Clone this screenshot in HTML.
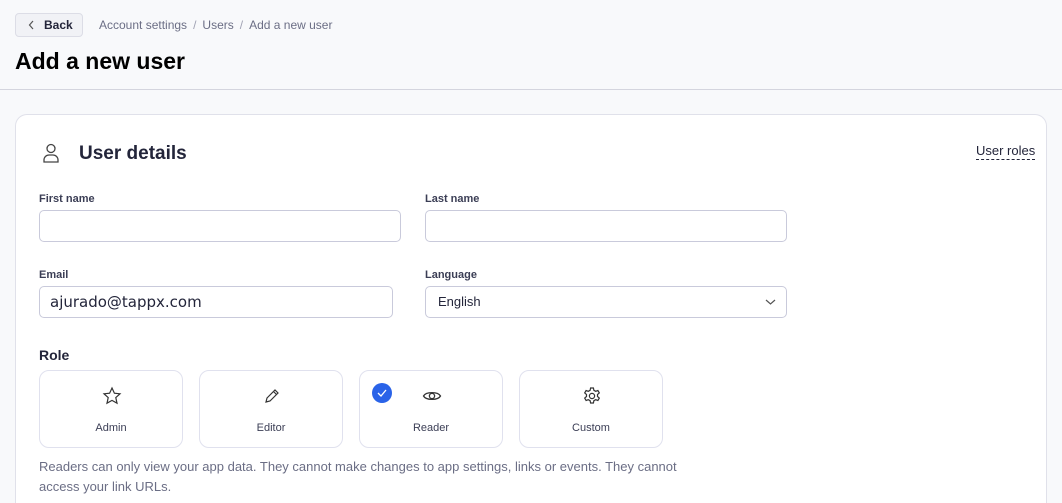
<!DOCTYPE html>
<html><head><style>
*{box-sizing:border-box;margin:0;padding:0}
html,body{width:1062px;height:503px;overflow:hidden}
body{background:#f8f9fb;font-family:"Liberation Sans",sans-serif;color:#23253a;position:relative}
.abs{position:absolute}
.back{left:15px;top:13px;width:68px;height:24px;border:1px solid #dcdde6;border-radius:4px;background:#f1f2f6;font-size:12px;font-weight:bold;line-height:22px;padding-left:28px;color:#23253a}
.crumb{left:99px;top:18px;font-size:12px;color:#6b6e85}
.crumb span{color:#a0a2b3;margin:0 6px}
h1{position:absolute;left:15px;top:48px;font-size:23px;font-weight:bold;color:#000}
.hr{left:0;top:89px;width:1062px;height:1px;background:#d4d5de}
.card{left:15px;top:114px;width:1032px;height:389px;background:#fff;border:1px solid #e0e1ea;border-bottom:none;border-radius:12px 12px 0 0}
.lbl{font-size:11px;font-weight:bold;color:#3b3e55}
.inp{border:1px solid #c9cadb;border-radius:5px;height:32px;background:#fff;font-size:13px;padding-left:10px;line-height:30px}
.role{width:144px;height:78px;border:1px solid #e0e1ee;border-radius:10px;background:#fff;font-size:11px;text-align:center;color:#3b3e55}
.role svg{position:absolute;left:62px;top:15px}
.role div{position:absolute;left:0;right:0;top:51px}
</style></head><body>
<div class="abs back"><svg class="abs" style="left:12px;top:6px" width="8" height="10" viewBox="0 0 8 10"><path d="M5 1L1.5 5L5 9" fill="none" stroke="#555" stroke-width="1.2"/></svg>Back</div>
<div class="abs crumb">Account settings<span>/</span>Users<span>/</span>Add a new user</div>
<h1>Add a new user</h1>
<div class="abs hr"></div>
<div class="abs card"></div>
<svg class="abs" style="left:42px;top:143px" width="18" height="20" viewBox="0 0 18 20" fill="none" stroke="#444" stroke-width="1.3"><circle cx="9" cy="5.5" r="4"/><path d="M2 19v-2a5 5 0 0 1 5-5h4a5 5 0 0 1 5 5v2z"/></svg>
<div class="abs" style="left:79px;top:143px;font-size:19px;font-weight:bold">User details</div>
<div class="abs" style="left:976px;top:143px;font-size:13px;border-bottom:1px dashed #23253a;line-height:16px">User roles</div>
<div class="abs lbl" style="left:39px;top:193px">First name</div>
<div class="abs inp" style="left:39px;top:210px;width:362px"></div>
<div class="abs lbl" style="left:425px;top:193px">Last name</div>
<div class="abs inp" style="left:425px;top:210px;width:362px"></div>
<div class="abs lbl" style="left:39px;top:269px">Email</div>
<div class="abs inp" style="left:39px;top:286px;width:354px;font-family:'DejaVu Sans',sans-serif;font-size:15px">ajurado@tappx.com</div>
<div class="abs lbl" style="left:425px;top:269px">Language</div>
<div class="abs inp" style="left:425px;top:286px;width:362px;padding-left:12px">English<svg class="abs" style="right:10px;top:11px" width="11" height="8" viewBox="0 0 11 8"><path d="M1 2l4.5 4L10 2" fill="none" stroke="#555" stroke-width="1.2"/></svg></div>
<div class="abs" style="left:39px;top:347px;font-size:14px;font-weight:bold">Role</div>
<div class="abs role" style="left:39px;top:370px"><svg width="20" height="20" viewBox="0 0 20 20" fill="none" stroke="#333" stroke-width="1.2"><path d="M10 2l2.4 5.2 5.6.6-4.2 3.8 1.2 5.6L10 14.4 5 17.2l1.2-5.6L2 7.8l5.6-.6z"/></svg><div>Admin</div></div>
<div class="abs role" style="left:199px;top:370px"><svg width="20" height="20" viewBox="0 0 20 20" fill="none" stroke="#333" stroke-width="1.2"><path d="M4 16l1-4L13 4l3 3-8 8zM11.5 5.5l3 3"/></svg><div>Editor</div></div>
<div class="abs role" style="left:359px;top:370px"><svg width="20" height="20" viewBox="0 0 20 20" fill="none" stroke="#333" stroke-width="1.3"><path d="M1.5 10C4 5.5 16 5.5 18.5 10 16 14.5 4 14.5 1.5 10z"/><circle cx="10" cy="10" r="2.6"/></svg><div>Reader</div>
<span class="abs" style="left:12px;top:12px;width:20px;height:20px;border-radius:50%;background:#2a63e8"><svg class="abs" style="left:5px;top:6px" width="10" height="8" viewBox="0 0 10 8"><path d="M1 4l3 3 5-6" fill="none" stroke="#fff" stroke-width="1.3"/></svg></span></div>
<div class="abs role" style="left:519px;top:370px"><svg width="20" height="20" viewBox="0 0 20 20" fill="none" stroke="#333" stroke-width="1.2"><circle cx="10" cy="10" r="2.6"/><path d="M8.6 2h2.8l.5 2.3 1.8 1 2.2-.8 1.4 2.4-1.8 1.6v2l1.8 1.6-1.4 2.4-2.2-.8-1.8 1-.5 2.3H8.6l-.5-2.3-1.8-1-2.2.8-1.4-2.4 1.8-1.6v-2L2.7 6.9l1.4-2.4 2.2.8 1.8-1z"/></svg><div>Custom</div></div>
<div class="abs" style="left:39px;top:457px;width:680px;font-size:13px;line-height:20px;color:#6b6e85">Readers can only view your app data. They cannot make changes to app settings, links or events. They cannot access your link URLs.</div>
</body></html>
